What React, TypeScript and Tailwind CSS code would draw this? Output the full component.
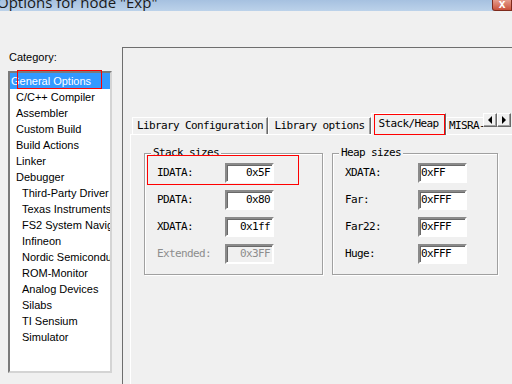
import React from 'react'

const categories: { label: string; level: number }[] = [
  { label: 'General Options', level: 0 },
  { label: 'C/C++ Compiler', level: 1 },
  { label: 'Assembler', level: 1 },
  { label: 'Custom Build', level: 1 },
  { label: 'Build Actions', level: 1 },
  { label: 'Linker', level: 1 },
  { label: 'Debugger', level: 1 },
  { label: 'Third-Party Driver', level: 2 },
  { label: 'Texas Instruments', level: 2 },
  { label: 'FS2 System Navigator', level: 2 },
  { label: 'Infineon', level: 2 },
  { label: 'Nordic Semiconductor', level: 2 },
  { label: 'ROM-Monitor', level: 2 },
  { label: 'Analog Devices', level: 2 },
  { label: 'Silabs', level: 2 },
  { label: 'TI Sensium', level: 2 },
  { label: 'Simulator', level: 2 },
]

const stackRows = [
  { label: 'IDATA:', value: '0x5F', disabled: false },
  { label: 'PDATA:', value: '0x80', disabled: false },
  { label: 'XDATA:', value: '0x1ff', disabled: false },
  { label: 'Extended:', value: '0x3FF', disabled: true },
]

const heapRows = [
  { label: 'XDATA:', value: '0xFF' },
  { label: 'Far:', value: '0xFFF' },
  { label: 'Far22:', value: '0xFFF' },
  { label: 'Huge:', value: '0xFFF' },
]

// the dialog uses the system bitmap font, 6px per character
const mono = "font-['DejaVu_Sans_Mono','Liberation_Mono',monospace] text-[11px] tracking-[-0.62px]"

function Tab({ label, width }: { label: string; width: string }) {
  return (
    <div
      className={`${width} h-[17px] shrink-0 flex items-center justify-center border-t border-l border-white border-r border-r-[#696969] shadow-[inset_-1px_0_0_#a0a0a0] ${mono} text-black whitespace-nowrap`}
    >
      {label}
    </div>
  )
}

function ArrowButton({ dir }: { dir: 'left' | 'right' }) {
  return (
    <div className="w-[14px] h-[14px] shrink-0 self-start bg-[#f0f0f0] border border-t-white border-l-white border-r-[#696969] border-b-[#696969] shadow-[inset_-1px_-1px_0_#a0a0a0] flex items-center justify-center">
      <svg width="6" height="8" viewBox="0 0 6 8">
        {dir === 'left' ? <polygon points="5,0 5,8 1,4" fill="#000" /> : <polygon points="1,0 1,8 5,4" fill="#000" />}
      </svg>
    </div>
  )
}

function Field({ value, align, disabled }: { value: string; align: 'left' | 'right'; disabled?: boolean }) {
  return (
    <div
      className={`w-[49px] h-[20px] border-2 border-t-[#8a8a8a] border-l-[#8a8a8a] border-r-white border-b-white shadow-[inset_1px_1px_0_#696969] flex items-center ${
        align === 'right' ? 'justify-end pr-[2px]' : 'justify-start pl-[1px]'
      } ${disabled ? 'bg-[#f0f0f0] text-[#8d8d8d]' : 'bg-white text-black'} ${mono}`}
    >
      {value}
    </div>
  )
}

export default function App() {
  return (
    <div className="w-[512px] h-[384px] overflow-hidden bg-[#f0f0f0] flex flex-col font-['Liberation_Sans',Arial,sans-serif]">
      {/* title bar */}
      <div className="h-[11px] shrink-0 flex bg-gradient-to-b from-[#a6c1e0] to-[#bcd2ea] overflow-hidden">
        <div className="flex-1 ml-[-3px] mt-[-7px] text-[15px] leading-[18px] text-[#1a1a1a] font-['Open_Sans','Noto_Sans',sans-serif] whitespace-nowrap">
          Options for node "Exp"
        </div>
        <div className="w-[20px] h-[11px] shrink-0 bg-gradient-to-b from-[#e59c8c] to-[#c9503a] border border-t-0 border-[#7e2a1c] rounded-bl-[3px] flex justify-center overflow-hidden">
          <span className="text-white text-[12px] leading-[8px] font-bold">x</span>
        </div>
      </div>

      <div className="flex-1 flex min-h-0">
        {/* category list */}
        <div className="w-[122px] shrink-0 pt-[39px]">
          <div className="pl-[9px] h-[14px] text-[11px] leading-[14px] text-black">Category:</div>
          <div className="relative mt-[7px] ml-[8px] w-[104px] h-[302px] border-2 border-t-[#7a7a7a] border-l-[#7a7a7a] border-r-[#d4d4d4] border-b-[#d4d4d4] bg-white">
            <div className="h-full overflow-hidden">
              {categories.map((c, i) => (
                <div
                  key={c.label}
                  className={`h-[16px] text-[11px] leading-[16px] whitespace-nowrap ${
                    i === 0 ? 'bg-[#3399ff] text-white pl-[1px]' : c.level === 1 ? 'pl-[6px] text-black' : 'pl-[12px] text-black'
                  }`}
                >
                  {c.label}
                </div>
              ))}
            </div>
            <div className="absolute left-[7px] top-[-3px] w-[85px] h-[19px] border border-[#ff0000]" />
          </div>
        </div>

        {/* options frame */}
        <div className="flex-1 mt-[36px] border-l border-t border-[#6e6e6e] pl-[7px] pt-[65px] flex flex-col min-w-0">
          {/* tab strip */}
          <div className="h-[21px] shrink-0 flex items-end pl-[2px] pr-[1px]">
            <Tab label="Library Configuration" width="w-[136px]" />
            <Tab label="Library options" width="w-[103px]" />
            <div
              className={`relative z-10 w-[75px] h-[22px] -mb-px shrink-0 flex items-center justify-center bg-[#f0f0f0] border-t border-l border-white border-r border-r-[#696969] shadow-[inset_-1px_0_0_#a0a0a0] ${mono} text-black`}
            >
              Stack/Heap
              <div className="absolute left-[2px] top-0 w-[71px] h-[21px] border border-[#ff0000]" />
            </div>
            <div className="flex-1 min-w-0 overflow-hidden flex items-end">
              <div className="shrink-0 h-[17px] flex items-center border-t border-l border-white pl-[2px] pr-[4px] whitespace-nowrap">
                <span className={`${mono} text-black`}>MISRA-C:2004</span>
              </div>
            </div>
            <ArrowButton dir="left" />
            <ArrowButton dir="right" />
          </div>

          {/* tab page */}
          <div className="flex-1 border-t border-l border-white pt-[18px] pl-[13px] flex gap-[9px]">
            <div className="relative w-[179px] h-[122px] border border-[#a0a0a0] shadow-[1px_1px_0_#fff,inset_1px_1px_0_#fff] pt-[9px] flex flex-col gap-[7px]">
              <span className={`absolute left-[6px] top-[-8px] px-[2px] bg-[#f0f0f0] leading-[13px] ${mono} text-black`}>
                Stack sizes
              </span>
              {stackRows.map((r) => (
                <div key={r.label} className="h-[20px] flex items-center">
                  <div className={`w-[80px] pl-[12px] ${mono} ${r.disabled ? 'text-[#8d8d8d]' : 'text-black'}`}>{r.label}</div>
                  <Field value={r.value} align="right" disabled={r.disabled} />
                </div>
              ))}
              <div className="absolute left-[2px] top-[1px] w-[152px] h-[30px] border border-[#ff0000]" />
            </div>

            <div className="relative w-[166px] h-[122px] border border-[#a0a0a0] shadow-[1px_1px_0_#fff,inset_1px_1px_0_#fff] pt-[9px] flex flex-col gap-[7px]">
              <span className={`absolute left-[6px] top-[-8px] px-[2px] bg-[#f0f0f0] leading-[13px] ${mono} text-black`}>
                Heap sizes
              </span>
              {heapRows.map((r) => (
                <div key={r.label} className="h-[20px] flex items-center">
                  <div className={`w-[85px] pl-[12px] ${mono} text-black`}>{r.label}</div>
                  <Field value={r.value} align="left" />
                </div>
              ))}
            </div>
          </div>
        </div>
      </div>
    </div>
  )
}
